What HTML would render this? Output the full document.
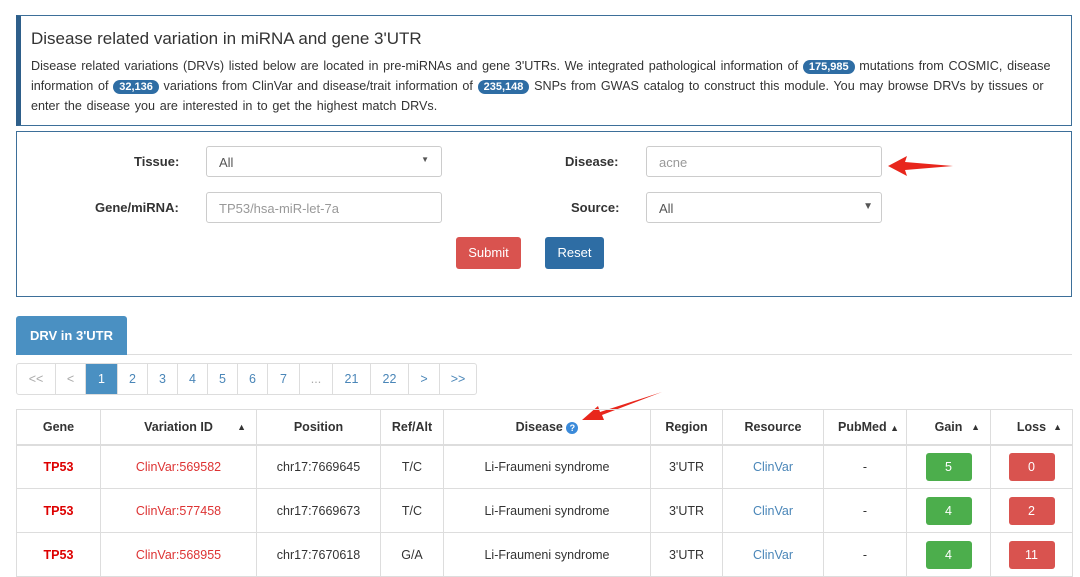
<!DOCTYPE html>
<html><head><style>
*{box-sizing:border-box;margin:0;padding:0}
body{width:1080px;height:576px;overflow:hidden;background:#fff;font-family:"Liberation Sans",Arial,sans-serif;color:#333;position:relative}
.abs{position:absolute}
.intro{left:16px;top:15px;width:1056px;height:111px;border:1px solid #3d6f99;border-left:5px solid #2e5f8a;background:#fff}
.intro h3{position:absolute;left:10px;top:13px;font-size:17px;font-weight:normal;color:#333}
.intro p{position:absolute;left:10px;top:41px;width:1045px;font-size:12.6px;word-spacing:1.2px;line-height:19px;color:#333;white-space:nowrap}
.bdg{background:#2e6da4;color:#fff;border-radius:9px;padding:1px 6px;font-weight:bold;font-size:11px;word-spacing:0}
.form{left:16px;top:131px;width:1056px;height:166px;border:1px solid #3d6f99}
.lbl{font-size:13px;font-weight:bold;color:#333}
.inp{border:1px solid #ccc;border-radius:3px;height:31px;font-size:13px;color:#555;padding:8px 12px;background:#fff}
.ph{color:#999}
.btn{color:#fff;font-size:13px;border-radius:3px;text-align:center;line-height:31px;height:32px}
.tab{left:16px;top:316px;width:111px;height:39px;background:#4a90c2;color:#fff;font-weight:bold;font-size:13px;line-height:39px;text-align:center;border-radius:3px 3px 0 0}
.tabline{left:127px;top:354px;width:945px;height:1px;background:#ddd}
.pag{left:16px;top:363px;height:32px;display:flex;border:1px solid #ddd;border-radius:3px}
.pag span{height:30px;line-height:30px;text-align:center;font-size:12.5px;color:#4a86b8;border-left:1px solid #ddd}
.pag span:first-child{border-left:none}
table{position:absolute;left:16px;top:409px;width:1057px;border-collapse:collapse;font-size:12.5px}
td,th{border:1px solid #ddd;text-align:center;height:44px}
th{height:35px;font-weight:bold;border-bottom:2px solid #ddd;position:relative}
th .c{position:absolute;right:10px;top:12px;font-size:9px}
.g{color:#d00;font-weight:bold}.r{color:#d33}.l{color:#4a86b8}
.bx{display:inline-block;width:46px;height:28px;line-height:28px;border-radius:3px;color:#fff}
</style></head><body>
<div class="abs intro"><h3>Disease related variation in miRNA and gene 3'UTR</h3>
<p>Disease related variations (DRVs) listed below are located in pre-miRNAs and gene 3'UTRs. We integrated pathological information of <span class="bdg">175,985</span> mutations from COSMIC, disease<br>information of <span class="bdg">32,136</span> variations from ClinVar and disease/trait information of <span class="bdg">235,148</span> SNPs from GWAS catalog to construct this module. You may browse DRVs by tissues or<br>enter the disease you are interested in to get the highest match DRVs.</p></div>
<div class="abs form"></div>
<div class="abs lbl" style="left:134px;top:154px">Tissue:</div>
<div class="abs inp" style="left:206px;top:146px;width:236px">All<span style="position:absolute;right:12px;top:8px;font-size:8px">▼</span></div>
<div class="abs lbl" style="left:565px;top:154px">Disease:</div>
<div class="abs inp ph" style="left:646px;top:146px;width:236px">acne</div>
<div class="abs lbl" style="left:95px;top:200px">Gene/miRNA:</div>
<div class="abs inp ph" style="left:206px;top:192px;width:236px">TP53/hsa-miR-let-7a</div>
<div class="abs lbl" style="left:571px;top:200px">Source:</div>
<div class="abs inp" style="left:646px;top:192px;width:236px">All<span style="position:absolute;right:8px;top:8px;font-size:10px">▼</span></div>
<div class="abs btn" style="left:456px;top:237px;width:65px;background:#d9534f">Submit</div>
<div class="abs btn" style="left:545px;top:237px;width:59px;background:#2e6da4">Reset</div>
<svg class="abs" style="left:885px;top:150px" width="70" height="30"><path d="M68 16 L20 12 L22 6 L3 16 L22 26 L20 20 Z" fill="#e8261c"/></svg>
<div class="abs tab">DRV in 3'UTR</div><div class="abs tabline"></div>
<div class="abs pag">
<span style="width:38px;color:#aaa">&lt;&lt;</span><span style="width:30px;color:#aaa">&lt;</span><span style="width:32px;background:#4a90c2;color:#fff">1</span><span style="width:30px">2</span><span style="width:30px">3</span><span style="width:30px">4</span><span style="width:30px">5</span><span style="width:30px">6</span><span style="width:32px">7</span><span style="width:33px;color:#aaa">...</span><span style="width:38px">21</span><span style="width:38px">22</span><span style="width:31px">&gt;</span><span style="width:37px">&gt;&gt;</span></div>
<svg class="abs" style="left:580px;top:388px" width="85" height="36"><path d="M82 4 L20 24 L18 18 L2 32 L24 32 L22 27 Z" fill="#e8261c"/></svg>
<table>
<tr><th style="width:84px">Gene</th><th style="width:156px">Variation ID<span class="c">▲</span></th><th style="width:124px">Position</th><th style="width:63px">Ref/Alt</th><th style="width:207px">Disease <span style="display:inline-block;width:12px;height:12px;border-radius:6px;background:#3b8ad9;color:#fff;font-size:9px;line-height:12px">?</span></th><th style="width:72px">Region</th><th style="width:101px">Resource</th><th style="width:83px;text-align:left;padding-left:14px">PubMed <span style="font-size:9px">▲</span></th><th style="width:84px">Gain<span class="c">▲</span></th><th>Loss<span class="c">▲</span></th></tr>
<tr><td class="g">TP53</td><td class="r">ClinVar:569582</td><td>chr17:7669645</td><td>T/C</td><td>Li-Fraumeni syndrome</td><td>3'UTR</td><td class="l">ClinVar</td><td>-</td><td><span class="bx" style="background:#4cae4c">5</span></td><td><span class="bx" style="background:#d9534f">0</span></td></tr>
<tr><td class="g">TP53</td><td class="r">ClinVar:577458</td><td>chr17:7669673</td><td>T/C</td><td>Li-Fraumeni syndrome</td><td>3'UTR</td><td class="l">ClinVar</td><td>-</td><td><span class="bx" style="background:#4cae4c">4</span></td><td><span class="bx" style="background:#d9534f">2</span></td></tr>
<tr><td class="g">TP53</td><td class="r">ClinVar:568955</td><td>chr17:7670618</td><td>G/A</td><td>Li-Fraumeni syndrome</td><td>3'UTR</td><td class="l">ClinVar</td><td>-</td><td><span class="bx" style="background:#4cae4c">4</span></td><td><span class="bx" style="background:#d9534f">11</span></td></tr>
</table>
</body></html>
